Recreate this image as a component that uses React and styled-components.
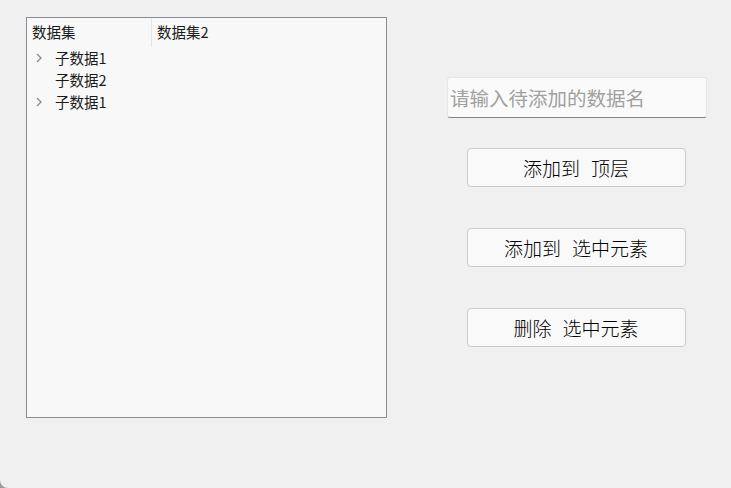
import styled, { createGlobalStyle } from "styled-components";

const GlobalStyle = createGlobalStyle`
  html, body {
    margin: 0;
    padding: 0;
    background: #9c9c9c;
  }
`;

const Window = styled.div`
  width: 731px;
  height: 488px;
  box-sizing: border-box;
  background: #f0f0f0;
  border-bottom-left-radius: 8px;
  display: flex;
  align-items: flex-start;
  padding: 17px 0 0 26px;
  font-family: "Noto Sans CJK SC", "Noto Sans", sans-serif;
  color: #1a1a1a;
`;

const Tree = styled.div`
  width: 361px;
  height: 401px;
  box-sizing: border-box;
  border: 1px solid #8b8b96;
  background: #f8f8f8;
  display: flex;
  flex-direction: column;
`;

const Header = styled.div`
  display: flex;
  height: 29px;
`;

const Section = styled.div`
  width: ${(p) => p.$width}px;
  box-sizing: border-box;
  padding-left: 5px;
  display: flex;
  align-items: center;
  font-size: 14.5px;
  line-height: 1;
  border-right: ${(p) => (p.$divider ? "1px solid #e4e4e4" : "none")};
`;

const Row = styled.div`
  display: flex;
  align-items: center;
  height: 22px;
  padding-left: 9px;
  font-size: 14.5px;
  line-height: 1;
`;

const Arrow = styled.span`
  width: 19px;
  display: flex;
  align-items: center;
`;

const Side = styled.div`
  display: flex;
  flex-direction: column;
  align-items: center;
  margin-left: 60px;
  padding-top: 60px;
`;

const Input = styled.input`
  width: 260px;
  height: 41px;
  box-sizing: border-box;
  background: #fafafa;
  border: 1px solid #e6e6e6;
  border-bottom: 1px solid #858585;
  border-radius: 3px;
  padding: 0 0 0 2px;
  font-family: inherit;
  font-size: 19.5px;
  outline: none;
  &::placeholder {
    color: #a0a0a0;
  }
`;

const Buttons = styled.div`
  display: flex;
  flex-direction: column;
  gap: 41px;
  margin: 30px 0 0 -2px;
`;

const Button = styled.button`
  width: 219px;
  height: 39px;
  box-sizing: border-box;
  background: #f9f9f9;
  border: 1px solid #cbcbcb;
  border-radius: 4px;
  font-family: inherit;
  font-weight: 300;
  font-size: 19px;
  color: #000;
  padding: 0;
  word-spacing: 7px;
`;

function Chevron() {
  return (
    <svg width="6" height="10" viewBox="0 0 6 10">
      <path d="M1 1 L5 5 L1 9" fill="none" stroke="#8a8a8a" strokeWidth="1.3" />
    </svg>
  );
}

const rows = [
  { name: "子数据1", children: true },
  { name: "子数据2", children: false },
  { name: "子数据1", children: true },
];

export default function App() {
  return (
    <>
      <GlobalStyle />
      <Window>
        <Tree>
          <Header>
            <Section $width={125} $divider>数据集</Section>
            <Section $width={200}>数据集2</Section>
          </Header>
          {rows.map((r, i) => (
            <Row key={i}>
              <Arrow>{r.children && <Chevron />}</Arrow>
              {r.name}
            </Row>
          ))}
        </Tree>
        <Side>
          <Input placeholder="请输入待添加的数据名" />
          <Buttons>
            <Button>添加到 顶层</Button>
            <Button>添加到 选中元素</Button>
            <Button>删除 选中元素</Button>
          </Buttons>
        </Side>
      </Window>
    </>
  );
}
